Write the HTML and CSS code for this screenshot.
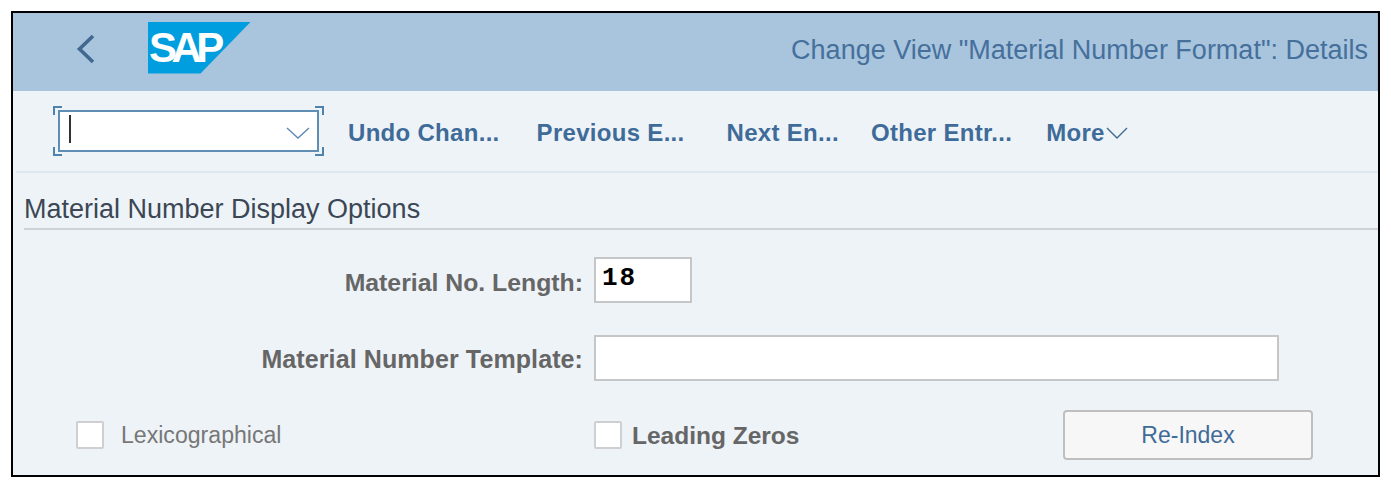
FILE: index.html
```html
<!DOCTYPE html>
<html lang="en">
<head>
<meta charset="utf-8">
<title>Change View "Material Number Format": Details</title>
<link rel="stylesheet" href="styles.css">
</head>
<body>
<div class="frame">
  <header class="shell">
    <svg class="back" width="24" height="32" viewBox="0 0 24 32" aria-hidden="true"><path d="M19 3 L5.5 16 L19 29" fill="none" stroke="#41688f" stroke-width="3.6"/></svg>
    <div class="logo"><span class="logo-text">SAP</span></div>
    <h1 class="title">Change View "Material Number Format": Details</h1>
  </header>
  <nav class="toolbar">
    <div class="combo">
      <i class="corner tl"></i><i class="corner tr"></i><i class="corner bl"></i><i class="corner br"></i>
      <div class="combo-box">
        <span class="caret"></span>
        <svg class="combo-arrow" width="24" height="14" viewBox="0 0 24 14" aria-hidden="true"><path d="M1 2 L12 12 L23 2" fill="none" stroke="#5c8ab5" stroke-width="1.4"/></svg>
      </div>
    </div>
    <a class="tool t1">Undo Chan...</a>
    <a class="tool t2">Previous E...</a>
    <a class="tool t3">Next En...</a>
    <a class="tool t4">Other Entr...</a>
    <a class="tool more">More<svg width="22" height="12" viewBox="0 0 22 12" aria-hidden="true"><path d="M1 1 L11 11 L21 1" fill="none" stroke="#41688f" stroke-width="1.4"/></svg></a>
  </nav>
  <main class="content">
    <h2 class="section">Material Number Display Options</h2>
    <div class="row row-len">
      <label class="label">Material No. Length:</label>
      <div class="field short">18</div>
    </div>
    <div class="row row-tpl">
      <label class="label">Material Number Template:</label>
      <div class="field long"></div>
    </div>
    <div class="row row-opts">
      <div class="opt-left"><span class="check"></span><span class="check-label">Lexicographical</span></div>
      <div class="opt-mid"><span class="check"></span><span class="check-label strong">Leading Zeros</span></div>
      <button class="btn" type="button">Re-Index</button>
    </div>
  </main>
</div>
</body>
</html>
```
FILE: styles.css
```css
* { box-sizing: border-box; }
html, body { margin: 0; padding: 0; background: #fff; }
body { font-family: "Liberation Sans", Arial, sans-serif; height: 489px; overflow: hidden; padding: 11px 0 0 11px; }
.frame { width: 1369px; height: 466px; border: 2px solid #000; background: #eef3f8; display: flex; flex-direction: column; }
.shell { height: 78px; flex: none; background: #a9c4dd; display: flex; align-items: center; padding-left: 61px; border-right: 1px solid #9db8d0; }
.back { flex: none; margin-top: -6px; }
.logo { flex: none; width: 103px; height: 52px; margin-left: 50px; margin-top: -9px; background: #009ede; clip-path: polygon(0 0, 100% 0, 51% 100%, 0 100%); display: flex; align-items: center; padding-left: 1px; }
.logo-text { color: #fff; font-weight: 700; font-size: 42px; letter-spacing: -5.5px; line-height: 1; }
.title { margin: -4px 0 0 auto; padding-right: 9px; font-size: 27px; font-weight: 400; color: #45709c; white-space: nowrap; }
.toolbar { height: 82px; flex: none; margin-left: 3px; border-bottom: 2px solid #dde7f1; display: flex; align-items: center; padding-left: 37px; position: relative; color: #3f6b98; }
.combo { position: relative; width: 271px; height: 50px; flex: none; margin-right: 24px; padding: 4px 5px; }
.combo-box { height: 100%; background: #fff; border: 2px solid #5f8db3; display: flex; align-items: center; justify-content: space-between; padding: 0 7px 0 9px; }
.caret { width: 2px; height: 28px; background: #333; margin-top: -4px; }
.combo-arrow { margin-top: 3px; }
.corner { position: absolute; width: 9px; height: 9px; border: 0 solid #4f82ad; }
.tl { left: 0; top: 0; border-width: 2px 0 0 2px; }
.tr { right: 0; top: 0; border-width: 2px 2px 0 0; }
.bl { left: 0; bottom: 0; border-width: 0 0 2px 2px; }
.br { right: 0; bottom: 0; border-width: 0 2px 2px 0; }
.tool { font-size: 24px; letter-spacing: 0.3px; font-weight: 700; color: #3f6b98; white-space: nowrap; margin-top: 4px; }
.t2 { margin-left: 37px; }
.t3 { margin-left: 42px; }
.t4 { margin-left: 32px; }
.more { margin-left: 34px; display: flex; align-items: center; gap: 1px; }
.content { flex: 1; padding: 0; }
.section { margin: 0 0 0 11px; height: 57px; padding-top: 22px; font-size: 27px; line-height: 29px; font-weight: 400; color: #3b4754; border-bottom: 2px solid #cfd3d7; }
.row { display: flex; align-items: center; }
.row-len { margin-top: 27px; height: 46px; }
.row-tpl { margin-top: 32px; height: 46px; }
.label { width: 581px; text-align: right; font-size: 25px; letter-spacing: 0.1px; font-weight: 700; color: #666; padding-right: 11px; margin-top: 2px; }
.row-len .label { margin-top: 5px; letter-spacing: 0; font-size: 24.8px; }
.field { background: #fff; border: 2px solid #c6c6c6; height: 100%; }
.short { width: 98px; font-family: "Liberation Mono", "DejaVu Sans Mono", monospace; font-weight: 700; font-size: 26px; letter-spacing: 2px; color: #000; padding: 4px 0 0 6px; line-height: 30px; }
.long { width: 685px; }
.row-opts { margin-top: 29px; height: 50px; padding-left: 63px; }
.opt-left, .opt-mid { display: flex; align-items: center; }
.opt-left { width: 518px; }
.opt-mid { width: 469px; }
.check { width: 28px; height: 28px; flex: none; background: #fff; border: 2px solid #cfcfd2; border-radius: 2px; }
.check-label { margin-left: 17px; font-size: 23.1px; color: #777; }
.strong { margin-left: 10px; margin-top: 2px; font-size: 24.5px; font-weight: 700; color: #666; }
.btn { width: 250px; height: 50px; flex: none; background: #f7f7f7; border: 2px solid #bfbfbf; border-radius: 4px; font: 23px "Liberation Sans", Arial, sans-serif; color: #3f6b98; padding: 0; }
```
